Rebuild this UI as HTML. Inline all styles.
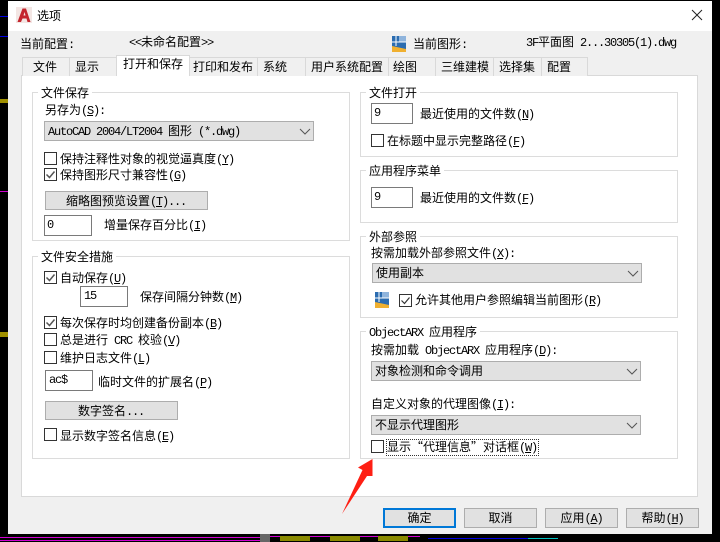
<!DOCTYPE html>
<html><head><meta charset="utf-8"><style>
html,body{margin:0;padding:0;background:#000;width:720px;height:542px;overflow:hidden}
#r{position:relative;width:720px;height:542px;overflow:hidden;background:#000;font:12px/14px "WenQuanYi Zen Hei","Noto Sans CJK SC",sans-serif;color:#000}
#r div,#r svg{position:absolute;box-sizing:border-box}
.t{white-space:pre;height:14px}
.t i{font:normal 12px/14px "Liberation Mono",monospace;letter-spacing:-1.2px}
.t u{font:normal 12px/14px "Liberation Mono",monospace;letter-spacing:-1.2px;text-decoration:underline}
.g{border:1px solid #dcdcdc;background:#fff}
.tab{background:#f0f0f0;border:1px solid #d9d9d9;border-bottom:none;top:57px;height:19px}
.c{background:#e1e1e1;border:1px solid #adadad}
.in{background:#fff;border:1px solid #7a7a7a}
.cb{background:#fff;border:1px solid #333;width:13px;height:13px}
.leg{background:#fff;padding:0 3px}
</style></head><body><div id="r">
<div style="left:0;top:16px;width:8px;height:1px;background:#0000e0"></div>
<div style="left:0;top:36px;width:8px;height:1px;background:#0000e0"></div>
<div style="left:0;top:99px;width:8px;height:4px;background:#a09000"></div>
<div style="left:0;top:191px;width:8px;height:1px;background:#d000d0"></div>
<div style="left:0;top:332px;width:8px;height:5px;background:#a09000"></div>
<div style="left:0;top:537px;width:260px;height:1px;background:#d000d0"></div>
<div style="left:0;top:540px;width:260px;height:1px;background:#d000d0"></div>
<div style="left:260px;top:534px;width:10px;height:8px;background:#666"></div>
<div style="left:270px;top:536px;width:150px;height:1px;background:#d000d0"></div>
<div style="left:280px;top:536px;width:30px;height:5px;background:#8a8a00"></div>
<div style="left:330px;top:536px;width:30px;height:5px;background:#8a8a00"></div>
<div style="left:378px;top:536px;width:30px;height:5px;background:#8a8a00"></div>
<div style="left:428px;top:538px;width:100px;height:1px;background:#0000e0"></div>
<div style="left:528px;top:538px;width:30px;height:1px;background:#00c0c0"></div>
<div style="left:8px;top:1px;width:704px;height:533px;background:#f0f0f0"></div>
<div style="left:8px;top:1px;width:704px;height:30px;background:#fff"></div>
<svg style="left:16px;top:7px" width="16" height="16" viewBox="0 0 16 16"><rect width="16" height="16" fill="#f3e6e4"/><path d="M1.500 15L6.500 1.500H10L14.500 15H11.500L10.500 11.500H6.500L5 15ZM7.500 8.500H9.500L8.500 5Z" fill="#c4262e" fill-rule="evenodd"/></svg>
<div class="t" style="left:37px;top:9px">选项</div>
<svg style="left:691px;top:9px" width="12" height="12" viewBox="0 0 12 12"><path d="M1 1L11 11M11 1L1 11" stroke="#222" stroke-width="1" fill="none"/></svg>

<div class="t" style="left:20px;top:37px">当前配置<i>:</i></div>
<div class="t" style="left:129px;top:35px"><i>&lt;&lt;</i>未命名配置<i>&gt;&gt;</i></div>
<svg style="left:392px;top:36px" width="14" height="16" viewBox="0 0 14 16"><rect width="14" height="16" fill="#2b6cb0"/><path d="M7 0H14V6H7Z" fill="#8fb4dc"/><path d="M0 10L14 13V16H0Z" fill="#f0b030"/><path d="M0 6H14M4 0V10" stroke="#fff" stroke-width="1"/></svg>
<div class="t" style="left:413px;top:37px">当前图形<i>:</i></div>
<div class="t" style="left:526px;top:35px"><i>3F</i>平面图<i> 2...30305(1).dwg</i></div>

<div style="left:21px;top:75px;width:677px;height:422px;background:#fff;border:1px solid #d9d9d9"></div>
<div class="tab t" style="left:22px;width:48px;padding:2px 0 0 10px;height:19px">文件</div>
<div class="tab t" style="left:69px;width:48px;padding:2px 0 0 5px;height:19px">显示</div>
<div class="tab t" style="left:189px;width:69px;padding:2px 0 0 3px;height:19px">打印和发布</div>
<div class="tab t" style="left:257px;width:49px;padding:2px 0 0 5px;height:19px">系统</div>
<div class="tab t" style="left:305px;width:84px;padding:2px 0 0 5px;height:19px">用户系统配置</div>
<div class="tab t" style="left:388px;width:48px;padding:2px 0 0 4px;height:19px">绘图</div>
<div class="tab t" style="left:435px;width:59px;padding:2px 0 0 5px;height:19px">三维建模</div>
<div class="tab t" style="left:493px;width:49px;padding:2px 0 0 5px;height:19px">选择集</div>
<div class="tab t" style="left:541px;width:47px;padding:2px 0 0 5px;height:19px">配置</div>
<div class="t" style="left:116px;top:55px;width:74px;height:21px;background:#fff;border:1px solid #d9d9d9;border-bottom:none;padding:1px 0 0 6px">打开和保存</div>

<div class="g" style="left:32px;top:92px;width:318px;height:149px"></div>
<div class="t leg" style="left:38px;top:86px">文件保存</div>
<div class="t" style="left:45px;top:103px">另存为<i>(</i><u>S</u><i>):</i></div>
<div class="c t" style="left:44px;top:121px;width:270px;height:20px;padding:2px 0 0 3px"><i>AutoCAD 2004/LT2004 </i>图形<i> (*.dwg)</i></div>
<svg style="left:299px;top:128px" width="12" height="7" viewBox="0 0 12 7"><path d="M1 1L6 6L11 1" stroke="#555" fill="none"/></svg>
<div class="cb" style="left:44px;top:152px"></div>
<div class="t" style="left:60px;top:152px">保持注释性对象的视觉逼真度<i>(</i><u>Y</u><i>)</i></div>
<div class="cb" style="left:44px;top:168px"></div>
<svg style="left:44px;top:168px" width="13" height="13" viewBox="0 0 13 13"><path d="M2.500 6.500L5.500 9.500L10.500 3.500" stroke="#555" stroke-width="1.500" fill="none"/></svg>
<div class="t" style="left:60px;top:168px">保持图形尺寸兼容性<i>(</i><u>G</u><i>)</i></div>
<div class="c t" style="left:45px;top:191px;width:163px;height:19px;padding:2px 0 0 20px">缩略图预览设置<i>(</i><u>T</u><i>)...</i></div>
<div class="in t" style="left:44px;top:215px;width:48px;height:21px;padding:1px 0 0 2px"><i>0</i></div>
<div class="t" style="left:104px;top:218px">增量保存百分比<i>(</i><u>I</u><i>)</i></div>

<div class="g" style="left:32px;top:256px;width:318px;height:203px"></div>
<div class="t leg" style="left:38px;top:250px">文件安全措施</div>
<div class="cb" style="left:44px;top:271px"></div>
<svg style="left:44px;top:271px" width="13" height="13" viewBox="0 0 13 13"><path d="M2.500 6.500L5.500 9.500L10.500 3.500" stroke="#555" stroke-width="1.500" fill="none"/></svg>
<div class="t" style="left:60px;top:271px">自动保存<i>(</i><u>U</u><i>)</i></div>
<div class="in t" style="left:80px;top:286px;width:48px;height:21px;padding:1px 0 0 3px"><i>15</i></div>
<div class="t" style="left:140px;top:290px">保存间隔分钟数<i>(</i><u>M</u><i>)</i></div>
<div class="cb" style="left:44px;top:316px"></div>
<svg style="left:44px;top:316px" width="13" height="13" viewBox="0 0 13 13"><path d="M2.500 6.500L5.500 9.500L10.500 3.500" stroke="#555" stroke-width="1.500" fill="none"/></svg>
<div class="t" style="left:60px;top:316px">每次保存时均创建备份副本<i>(</i><u>B</u><i>)</i></div>
<div class="cb" style="left:44px;top:333px"></div>
<div class="t" style="left:60px;top:333px">总是进行<i> CRC </i>校验<i>(</i><u>V</u><i>)</i></div>
<div class="cb" style="left:44px;top:351px"></div>
<div class="t" style="left:60px;top:351px">维护日志文件<i>(</i><u>L</u><i>)</i></div>
<div class="in t" style="left:45px;top:370px;width:48px;height:21px;padding:1px 0 0 3px"><i>ac$</i></div>
<div class="t" style="left:98px;top:375px">临时文件的扩展名<i>(</i><u>P</u><i>)</i></div>
<div class="c t" style="left:45px;top:401px;width:133px;height:19px;padding:2px 0 0 32px">数字签名<i>...</i></div>
<div class="cb" style="left:44px;top:428px"></div>
<div class="t" style="left:60px;top:429px">显示数字签名信息<i>(</i><u>E</u><i>)</i></div>

<div class="g" style="left:360px;top:92px;width:318px;height:65px"></div>
<div class="t leg" style="left:366px;top:86px">文件打开</div>
<div class="in t" style="left:371px;top:103px;width:42px;height:21px;padding:1px 0 0 2px"><i>9</i></div>
<div class="t" style="left:420px;top:107px">最近使用的文件数<i>(</i><u>N</u><i>)</i></div>
<div class="cb" style="left:371px;top:134px"></div>
<div class="t" style="left:387px;top:134px">在标题中显示完整路径<i>(</i><u>F</u><i>)</i></div>

<div class="g" style="left:360px;top:170px;width:318px;height:53px"></div>
<div class="t leg" style="left:366px;top:164px">应用程序菜单</div>
<div class="in t" style="left:371px;top:187px;width:42px;height:21px;padding:1px 0 0 2px"><i>9</i></div>
<div class="t" style="left:420px;top:191px">最近使用的文件数<i>(</i><u>F</u><i>)</i></div>

<div class="g" style="left:360px;top:236px;width:318px;height:82px"></div>
<div class="t leg" style="left:366px;top:230px">外部参照</div>
<div class="t" style="left:371px;top:246px">按需加载外部参照文件<i>(</i><u>X</u><i>):</i></div>
<div class="c t" style="left:372px;top:263px;width:270px;height:20px;padding:2px 0 0 3px">使用副本</div>
<svg style="left:627px;top:270px" width="12" height="7" viewBox="0 0 12 7"><path d="M1 1L6 6L11 1" stroke="#555" fill="none"/></svg>
<svg style="left:375px;top:292px" width="14" height="16" viewBox="0 0 14 16"><rect width="14" height="16" fill="#2b6cb0"/><path d="M7 0H14V6H7Z" fill="#8fb4dc"/><path d="M0 10L14 13V16H0Z" fill="#f0b030"/><path d="M0 6H14M4 0V10" stroke="#fff" stroke-width="1"/></svg>
<div class="cb" style="left:399px;top:294px"></div>
<svg style="left:399px;top:294px" width="13" height="13" viewBox="0 0 13 13"><path d="M2.500 6.500L5.500 9.500L10.500 3.500" stroke="#333" stroke-width="1.200" fill="none"/></svg>
<div class="t" style="left:415px;top:293px">允许其他用户参照编辑当前图形<i>(</i><u>R</u><i>)</i></div>

<div class="g" style="left:360px;top:331px;width:318px;height:128px"></div>
<div class="t leg" style="left:366px;top:325px"><i>ObjectARX </i>应用程序</div>
<div class="t" style="left:371px;top:343px">按需加载<i> ObjectARX </i>应用程序<i>(</i><u>D</u><i>):</i></div>
<div class="c t" style="left:371px;top:361px;width:270px;height:20px;padding:2px 0 0 3px">对象检测和命令调用</div>
<svg style="left:626px;top:368px" width="12" height="7" viewBox="0 0 12 7"><path d="M1 1L6 6L11 1" stroke="#555" fill="none"/></svg>
<div class="t" style="left:371px;top:397px">自定义对象的代理图像<i>(</i><u>I</u><i>):</i></div>
<div class="c t" style="left:371px;top:415px;width:270px;height:20px;padding:2px 0 0 3px">不显示代理图形</div>
<svg style="left:626px;top:422px" width="12" height="7" viewBox="0 0 12 7"><path d="M1 1L6 6L11 1" stroke="#555" fill="none"/></svg>
<div class="cb" style="left:371px;top:440px"></div>
<div class="t" style="left:387px;top:440px;width:151px;height:15px;outline:1px dotted #333">显示“代理信息”对话框<i>(</i><u>W</u><i>)</i></div>

<svg style="left:335px;top:455px" width="45" height="65" viewBox="335 455 45 65"><path d="M372.500 459L358 467.500L362.500 470L342 514L367 476L372.500 476Z" fill="#fe1f14"/></svg>

<div class="t" style="left:383px;top:508px;width:73px;height:20px;background:#e1e1e1;border:2px solid #0078d7;text-align:center;padding-top:1px">确定</div>
<div class="c t" style="left:464px;top:508px;width:73px;height:20px;text-align:center;padding-top:2px">取消</div>
<div class="c t" style="left:545px;top:508px;width:73px;height:20px;text-align:center;padding-top:2px">应用<i>(</i><u>A</u><i>)</i></div>
<div class="c t" style="left:626px;top:508px;width:73px;height:20px;text-align:center;padding-top:2px">帮助<i>(</i><u>H</u><i>)</i></div>
</div></body></html>
